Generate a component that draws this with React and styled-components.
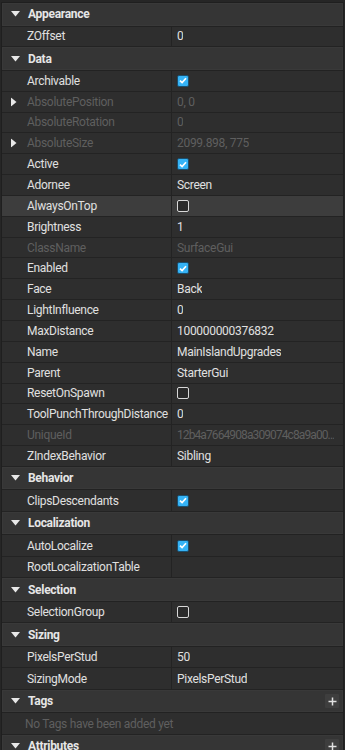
import React from 'react';
import styled, { createGlobalStyle } from 'styled-components';

const GlobalStyle = createGlobalStyle`
  html, body {
    margin: 0;
    padding: 0;
    background: #262626;
  }
  * {
    box-sizing: border-box;
  }
`;

const sections = [
  {
    title: 'Appearance',
    rows: [{ name: 'ZOffset', value: '0' }],
  },
  {
    title: 'Data',
    rows: [
      { name: 'Archivable', check: true },
      { name: 'AbsolutePosition', value: '0, 0', disabled: true, expand: true },
      { name: 'AbsoluteRotation', value: '0', disabled: true },
      { name: 'AbsoluteSize', value: '2099.898, 775', disabled: true, expand: true },
      { name: 'Active', check: true },
      { name: 'Adornee', value: 'Screen' },
      { name: 'AlwaysOnTop', check: false, hover: true },
      { name: 'Brightness', value: '1' },
      { name: 'ClassName', value: 'SurfaceGui', disabled: true },
      { name: 'Enabled', check: true },
      { name: 'Face', value: 'Back' },
      { name: 'LightInfluence', value: '0' },
      { name: 'MaxDistance', value: '100000000376832' },
      { name: 'Name', value: 'MainIslandUpgrades' },
      { name: 'Parent', value: 'StarterGui' },
      { name: 'ResetOnSpawn', check: false },
      { name: 'ToolPunchThroughDistance', value: '0' },
      { name: 'UniqueId', value: '12b4a7664908a309074c8a9a00...', disabled: true, narrow: true },
      { name: 'ZIndexBehavior', value: 'Sibling' },
    ],
  },
  {
    title: 'Behavior',
    rows: [{ name: 'ClipsDescendants', check: true }],
  },
  {
    title: 'Localization',
    rows: [
      { name: 'AutoLocalize', check: true },
      { name: 'RootLocalizationTable', value: '' },
    ],
  },
  {
    title: 'Selection',
    rows: [{ name: 'SelectionGroup', check: false }],
  },
  {
    title: 'Sizing',
    rows: [
      { name: 'PixelsPerStud', value: '50' },
      { name: 'SizingMode', value: 'PixelsPerStud' },
    ],
  },
  {
    title: 'Tags',
    add: true,
    empty: 'No Tags have been added yet',
  },
  {
    title: 'Attributes',
    add: true,
  },
];

const CaretDown = () => (
  <svg width="9" height="6" viewBox="0 0 9 6">
    <path d="M0 0 H9 L4.5 5.5 Z" fill="#e8e8e8" />
  </svg>
);

const CaretRight = () => (
  <svg width="6" height="9" viewBox="0 0 6 9">
    <path d="M0 0 V9 L5.5 4.5 Z" fill="#e8e8e8" />
  </svg>
);

const Check = () => (
  <svg width="8" height="7" viewBox="0 0 8 7">
    <path d="M1 3.6 L3.1 5.6 L7 1.2" fill="none" stroke="#fff" strokeWidth="1.7" />
  </svg>
);

const Plus = () => (
  <svg width="9" height="9" viewBox="0 0 9 9">
    <path d="M4.5 0.5 V8.5 M0.5 4.5 H8.5" stroke="#e0e0e0" strokeWidth="1.5" />
  </svg>
);

const App = () => {
  return (
    <>
      <GlobalStyle />
      <Panel>
        {sections.map((section, si) => (
          <Section key={section.title} $rowHeight={si < 2 ? 20.85 : 21.5}>
            <Header>
              <Caret>
                <CaretDown />
              </Caret>
              <HeaderTitle>{section.title}</HeaderTitle>
              {section.add && (
                <AddButton>
                  <Plus />
                </AddButton>
              )}
            </Header>
            {section.rows &&
              section.rows.map((row) => (
                <Row key={row.name} $hover={row.hover}>
                  <NameCell>
                    {row.expand && (
                      <Expander>
                        <CaretRight />
                      </Expander>
                    )}
                    <NameText $disabled={row.disabled}>{row.name}</NameText>
                  </NameCell>
                  <ValueCell>
                    {row.check === undefined ? (
                      <ValueText $disabled={row.disabled} $narrow={row.narrow}>
                        {row.value}
                      </ValueText>
                    ) : (
                      <CheckBox $checked={row.check}>{row.check && <Check />}</CheckBox>
                    )}
                  </ValueCell>
                </Row>
              ))}
            {section.empty && (
              <Row>
                <EmptyText>{section.empty}</EmptyText>
              </Row>
            )}
          </Section>
        ))}
      </Panel>
    </>
  );
};

export default App;

const Panel = styled.div`
  width: 343px;
  height: 748px;
  margin: 2px 0 0 1px;
  overflow: hidden;
  background: #2e2e2e;
  border: 1px solid #1f1f1f;
  border-bottom: none;
  font-family: Roboto, "Noto Sans", sans-serif;
  font-size: 12px;
  letter-spacing: -0.3px;
`;

const Section = styled.div`
  --row-h: ${({ $rowHeight }) => $rowHeight}px;
`;

const Header = styled.div`
  position: relative;
  height: 23.5px;
  display: flex;
  align-items: center;
  background: #353535;
  border-bottom: 1px solid #222;
  box-shadow: inset 0 0 0 1px #393939;
`;

const Caret = styled.span`
  width: 26px;
  display: flex;
  justify-content: center;
`;

const HeaderTitle = styled.span`
  font-weight: bold;
  color: #e6e6e6;
`;

const AddButton = styled.span`
  position: absolute;
  right: 4px;
  top: 50%;
  transform: translateY(-50%);
  width: 14px;
  height: 14px;
  display: flex;
  align-items: center;
  justify-content: center;
  background: #3e3e3e;
  border-radius: 1px;
`;

const Row = styled.div`
  height: var(--row-h);
  display: flex;
  background: ${({ $hover }) => ($hover ? '#3d3d3d' : '#2e2e2e')};
  border-bottom: 1px solid #232323;
`;

const NameCell = styled.div`
  position: relative;
  width: 170px;
  flex-shrink: 0;
  display: flex;
  align-items: center;
  padding-left: 25px;
  border-right: 1px solid #232323;
`;

const Expander = styled.span`
  position: absolute;
  left: 9px;
  top: 50%;
  transform: translateY(-50%);
  display: flex;
`;

const NameText = styled.span`
  color: ${({ $disabled }) => ($disabled ? '#5f5f5f' : '#e0e0e0')};
  white-space: nowrap;
`;

const ValueCell = styled.div`
  flex: 1;
  display: flex;
  align-items: center;
  padding-left: 5px;
  min-width: 0;
`;

const ValueText = styled.span`
  color: ${({ $disabled }) => ($disabled ? '#5f5f5f' : '#e0e0e0')};
  letter-spacing: ${({ $narrow }) => ($narrow ? '-0.9px' : 'inherit')};
  white-space: nowrap;
  overflow: hidden;
`;

const CheckBox = styled.span`
  width: 12px;
  height: 12px;
  display: flex;
  align-items: center;
  justify-content: center;
  border-radius: 2px;
  background: ${({ $checked }) => ($checked ? '#35b3f6' : '#2a2a2a')};
  border: ${({ $checked }) => ($checked ? '1px solid #1a4f6e' : '1.5px solid #d8d8d8')};
`;

const EmptyText = styled.span`
  display: flex;
  align-items: center;
  padding-left: 23px;
  color: #5f5f5f;
`;
